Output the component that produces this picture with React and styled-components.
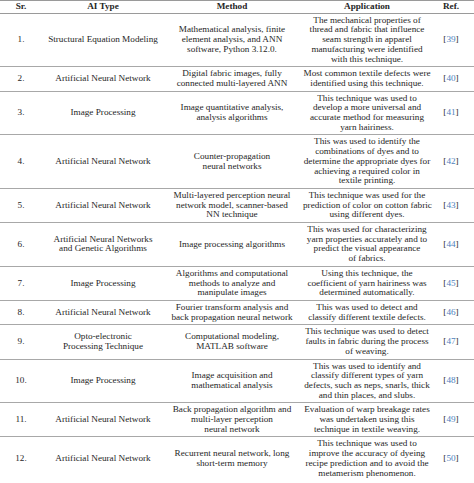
import React from 'react';
import styled, { createGlobalStyle } from "styled-components";

const GlobalStyle = createGlobalStyle`
    html, body {
        margin: 0;
        padding: 0;
        background: #ffffff;
    }
`;

const Table = styled.table`
    width: 474px;
    table-layout: fixed;
    border-collapse: collapse;
    font-family: "Liberation Serif", "Times New Roman", serif;
    font-size: 9.2px;
    line-height: 9.7px;
    color: #262626;
    border-top: 1.5px solid #9a9a9a;
`;

const HeadCell = styled.th`
    padding: 1px 3px;
    font-weight: bold;
    text-align: center;
    white-space: nowrap;
    border-bottom: 1.5px solid #9a9a9a;
    padding-right: ${props => props.$ref ? "9px" : "3px"};
`;

const Row = styled.tr`
    border-bottom: ${props => props.$last ? "none" : "1px solid #a8a8a8"};
`;

const Cell = styled.td`
    padding: 2px 3px;
    text-align: center;
    vertical-align: middle;
    white-space: nowrap;
    padding-right: ${props => props.$ref ? "9px" : "3px"};
`;

const RefLink = styled.span`
    color: #4d7fc0;
`;

const rows = [
    {
        type: ["Structural Equation Modeling"],
        method: ["Mathematical analysis, finite", "element analysis, and ANN", "software, Python 3.12.0."],
        app: ["The mechanical properties of", "thread and fabric that influence", "seam strength in apparel", "manufacturing were identified", "with this technique."],
        ref: 39
    },
    {
        type: ["Artificial Neural Network"],
        method: ["Digital fabric images, fully", "connected multi-layered ANN"],
        app: ["Most common textile defects were", "identified using this technique."],
        ref: 40
    },
    {
        type: ["Image Processing"],
        method: ["Image quantitative analysis,", "analysis algorithms"],
        app: ["This technique was used to", "develop a more universal and", "accurate method for measuring", "yarn hairiness."],
        ref: 41
    },
    {
        type: ["Artificial Neural Network"],
        method: ["Counter-propagation", "neural networks"],
        app: ["This was used to identify the", "combinations of dyes and to", "determine the appropriate dyes for", "achieving a required color in", "textile printing."],
        ref: 42
    },
    {
        type: ["Artificial Neural Network"],
        method: ["Multi-layered perception neural", "network model, scanner-based", "NN technique"],
        app: ["This technique was used for the", "prediction of color on cotton fabric", "using different dyes."],
        ref: 43
    },
    {
        type: ["Artificial Neural Networks", "and Genetic Algorithms"],
        method: ["Image processing algorithms"],
        app: ["This was used for characterizing", "yarn properties accurately and to", "predict the visual appearance", "of fabrics."],
        ref: 44
    },
    {
        type: ["Image Processing"],
        method: ["Algorithms and computational", "methods to analyze and", "manipulate images"],
        app: ["Using this technique, the", "coefficient of yarn hairiness was", "determined automatically."],
        ref: 45
    },
    {
        type: ["Artificial Neural Network"],
        method: ["Fourier transform analysis and", "back propagation neural network"],
        app: ["This was used to detect and", "classify different textile defects."],
        ref: 46
    },
    {
        type: ["Opto-electronic", "Processing Technique"],
        method: ["Computational modeling,", "MATLAB software"],
        app: ["This technique was used to detect", "faults in fabric during the process", "of weaving."],
        ref: 47
    },
    {
        type: ["Image Processing"],
        method: ["Image acquisition and", "mathematical analysis"],
        app: ["This was used to identify and", "classify different types of yarn", "defects, such as neps, snarls, thick", "and thin places, and slubs."],
        ref: 48
    },
    {
        type: ["Artificial Neural Network"],
        method: ["Back propagation algorithm and", "multi-layer perception", "neural network"],
        app: ["Evaluation of warp breakage rates", "was undertaken using this", "technique in textile weaving."],
        ref: 49
    },
    {
        type: ["Artificial Neural Network"],
        method: ["Recurrent neural network, long", "short-term memory"],
        app: ["This technique was used to", "improve the accuracy of dyeing", "recipe prediction and to avoid the", "metamerism phenomenon."],
        ref: 50
    }
];

const Lines = ({ lines }) => lines.map((l, i) => (
    <React.Fragment key={i}>
        {i > 0 && <br />}
        {l}
    </React.Fragment>
));

const App = () => {
    return (
        <>
            <GlobalStyle />
            <Table>
                <colgroup>
                    <col style={{ width: 42 }} />
                    <col style={{ width: 122 }} />
                    <col style={{ width: 136 }} />
                    <col style={{ width: 134 }} />
                    <col style={{ width: 40 }} />
                </colgroup>
                <thead>
                    <tr>
                        <HeadCell>Sr.</HeadCell>
                        <HeadCell>AI Type</HeadCell>
                        <HeadCell>Method</HeadCell>
                        <HeadCell>Application</HeadCell>
                        <HeadCell $ref>Ref.</HeadCell>
                    </tr>
                </thead>
                <tbody>
                    {rows.map((r, i) => (
                        <Row key={i} $last={i === rows.length - 1}>
                            <Cell>{i + 1}.</Cell>
                            <Cell><Lines lines={r.type} /></Cell>
                            <Cell><Lines lines={r.method} /></Cell>
                            <Cell><Lines lines={r.app} /></Cell>
                            <Cell $ref>[<RefLink>{r.ref}</RefLink>]</Cell>
                        </Row>
                    ))}
                </tbody>
            </Table>
        </>
    );
};

export default App;
